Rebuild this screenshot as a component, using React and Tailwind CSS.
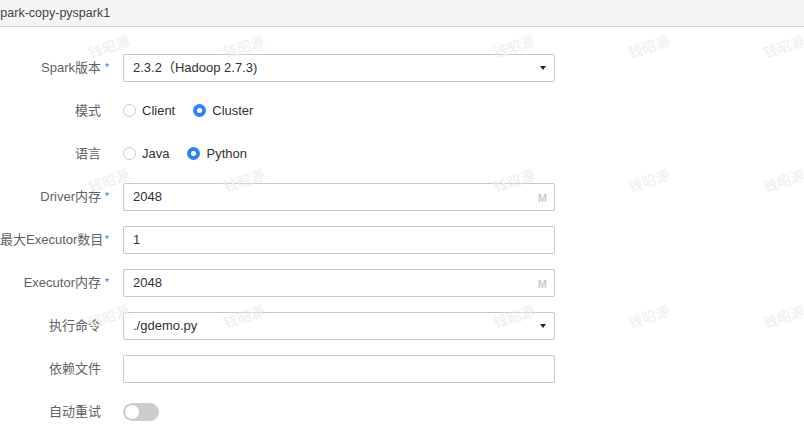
import React from "react";

const font = { fontFamily: '"Liberation Sans", Arial, "Noto Sans CJK SC", sans-serif' };

function Label({ text, required }) {
  return (
    <div className="relative w-[114px] shrink-0 whitespace-nowrap pr-[13px] text-right text-[13px] text-[#606266]">
      {text}
      {required && <span className="absolute right-[5px] top-[1px] text-[11px] text-[#3a7be0]">*</span>}
    </div>
  );
}

function Row({ label, required, children }) {
  return (
    <div className="flex h-[43px] items-center">
      <Label text={label} required={required} />
      <div className="ml-[9px] flex items-center">{children}</div>
    </div>
  );
}

function TextBox({ value, suffix, select }) {
  return (
    <div className="relative flex h-[28px] w-[432px] items-center rounded-[2px] border border-[#c8c8c8] bg-white pl-[9px] text-[13px] text-[#333]">
      {value}
      {suffix && (
        <span className="absolute right-[7px] top-[6px] text-[11px] font-bold text-[#c3cde0]">{suffix}</span>
      )}
      {select && (
        <span className="absolute right-[8px] top-[11px] h-0 w-0 border-x-[3.5px] border-t-[4px] border-x-transparent border-t-[#222]" />
      )}
    </div>
  );
}

function Radio({ label, checked }) {
  return (
    <div className="mr-[18px] flex items-center text-[13px] text-[#333]">
      {checked ? (
        <span className="h-[13px] w-[13px] rounded-full border-[4px] border-[#2f86e8] bg-white" />
      ) : (
        <span className="h-[13px] w-[13px] rounded-full border border-[#c8c8c8] bg-white" />
      )}
      <span className="ml-[6px]">{label}</span>
    </div>
  );
}

function Watermarks() {
  const ys = [40, 174, 310];
  const xs = [88, 223, 493, 628, 763];
  return (
    <div className="pointer-events-none absolute inset-0 overflow-hidden">
      {ys.map((y) =>
        xs.map((x) => (
          <span
            key={`${x}-${y}`}
            className="absolute -rotate-[18deg] whitespace-nowrap text-[14px] leading-none text-[#ededed]"
            style={{ left: x, top: y }}
          >
            钱昭源
          </span>
        ))
      )}
    </div>
  );
}

export default function App() {
  return (
    <div className="relative h-[439px] w-[804px] overflow-hidden bg-white" style={font}>
      <div className="flex h-[27px] items-center border-b border-[#d0d0d0] bg-[#f4f4f4] text-[12.5px] text-[#444]">
        <span className="-ml-[8px]">Spark-copy-pyspark1</span>
      </div>
      <div className="pt-[19px]">
        <Row label="Spark版本" required>
          <TextBox value="2.3.2（Hadoop 2.7.3)" select />
        </Row>
        <Row label="模式">
          <Radio label="Client" />
          <Radio label="Cluster" checked />
        </Row>
        <Row label="语言">
          <Radio label="Java" />
          <Radio label="Python" checked />
        </Row>
        <Row label="Driver内存" required>
          <TextBox value="2048" suffix="M" />
        </Row>
        <Row label="最大Executor数目" required>
          <TextBox value="1" />
        </Row>
        <Row label="Executor内存" required>
          <TextBox value="2048" suffix="M" />
        </Row>
        <Row label="执行命令">
          <TextBox value="./gdemo.py" select />
        </Row>
        <Row label="依赖文件">
          <TextBox value="" />
        </Row>
        <Row label="自动重试">
          <div className="flex h-[18px] w-[36px] items-center rounded-full bg-[#cccccc] pl-[2px]">
            <span className="h-[14px] w-[14px] rounded-full bg-white" />
          </div>
        </Row>
      </div>
      <Watermarks />
    </div>
  );
}
